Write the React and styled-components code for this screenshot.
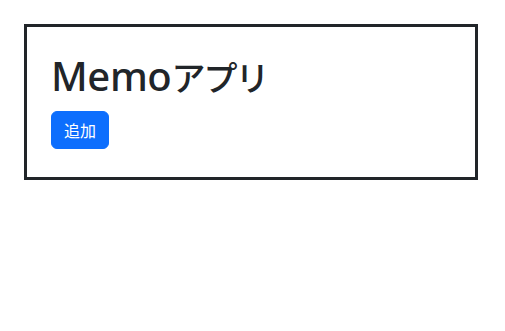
import React from "react";
import styled, { createGlobalStyle } from "styled-components";

const GlobalStyle = createGlobalStyle`
  body {
    margin: 0;
    background: #fff;
    font-family: "Noto Sans", "Noto Sans CJK JP", sans-serif;
    color: #212529;
  }
`;

const Panel = styled.div`
  box-sizing: border-box;
  width: 454px;
  margin: 24px 0 0 24px;
  border: 3px solid #212529;
  padding: 25px 24px 28px;
`;

const Title = styled.h1`
  margin: 0 0 11px;
  height: 48px;
  font-size: 40px;
  font-weight: 500;
  line-height: 48px;
  letter-spacing: -0.4px;
  font-family: "Noto Sans", "Noto Sans CJK JP", sans-serif;
`;

const Kana = styled.span`
  font-size: 34px;
  line-height: 34px;
  letter-spacing: -2px;
  font-family: "Noto Sans CJK JP", sans-serif;
`;

const Button = styled.button`
  display: block;
  box-sizing: border-box;
  height: 38px;
  padding: 0 12px;
  border: 1px solid #0d6efd;
  border-radius: 6px;
  background: #0d6efd;
  color: #fff;
  font-size: 16px;
  line-height: 24px;
  font-family: "Noto Sans CJK JP", sans-serif;
  cursor: pointer;
`;

export default function App() {
  return (
    <>
      <GlobalStyle />
      <Panel>
        <Title>
          Memo<Kana>アプリ</Kana>
        </Title>
        <Button>追加</Button>
      </Panel>
    </>
  );
}
